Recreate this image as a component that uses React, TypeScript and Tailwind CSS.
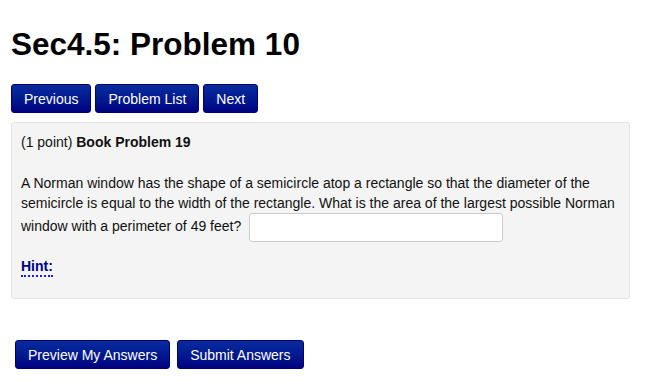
import React from 'react';

const navBtn =
  'h-[29px] px-[12px] rounded-[3px] border border-[#00006a] bg-gradient-to-b from-[#0a2b9e] to-[#000080] text-white text-[14px] leading-none';

const App: React.FC = () => {
  return (
    <div className="min-h-screen bg-white text-black font-['Liberation_Sans',Arial,sans-serif]">
      <div className="px-[11px] pt-[26px]">
        {/* Title */}
        <h1 className="text-[31.5px] font-bold leading-[36px] text-black">Sec4.5: Problem 10</h1>

        {/* Navigation */}
        <div className="mt-[22px] flex gap-[4px]">
          <button className={navBtn}>Previous</button>
          <button className={navBtn}>Problem List</button>
          <button className={navBtn}>Next</button>
        </div>

        {/* Problem panel */}
        <div className="mt-[9px] w-[619px] h-[177px] rounded-[3px] border border-[#e3e3e3] bg-[#f4f4f4] px-[9px] pt-[9px] text-[14px] leading-[20px] text-[#111]">
          <p>
            (1 point) <b>Book Problem 19</b>
          </p>
          <p className="mt-[21px]">
            A Norman window has the shape of a semicircle atop a rectangle so that the diameter of the
            semicircle is equal to the width of the rectangle. What is the area of the largest possible Norman
            window with a perimeter of 49 feet?{' '}
            <input
              type="text"
              className="ml-[4px] h-[29px] w-[254px] rounded-[3px] border border-[#cccccc] bg-white align-middle"
            />
          </p>
          <p className="mt-[14px]">
            <span className="font-bold text-[#00008b] border-b-2 border-dotted border-[#1a1aff] pb-[1px]">Hint:</span>
          </p>
        </div>

        {/* Submit buttons */}
        <div className="mt-[41px] ml-[4px] flex gap-[7px]">
          <button className={navBtn}>Preview My Answers</button>
          <button className={navBtn}>Submit Answers</button>
        </div>
      </div>
    </div>
  );
};

export default App;
